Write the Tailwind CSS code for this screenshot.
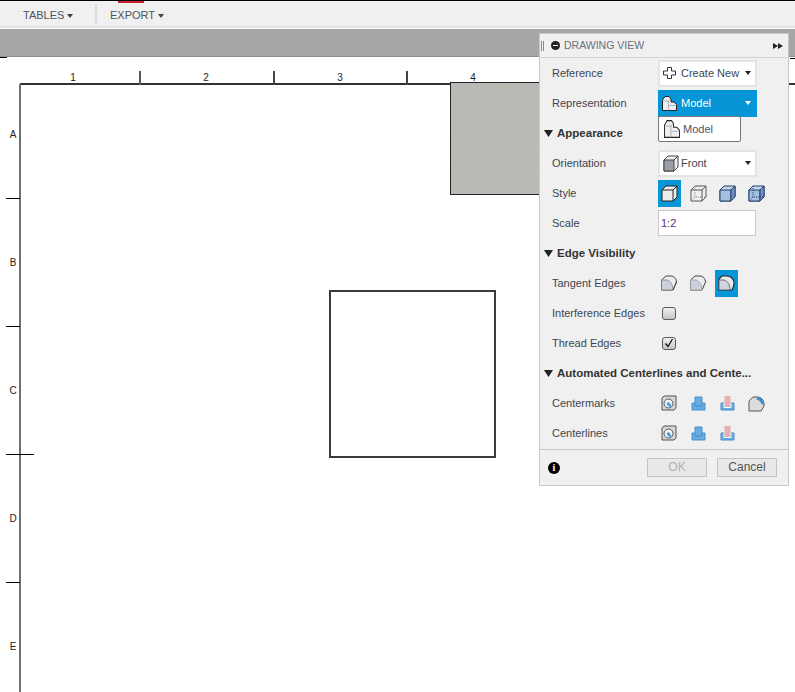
<!DOCTYPE html>
<html lang="en">
<head>
  <meta charset="UTF-8" />
  <title>Drawing View</title>
  <script src="https://cdn.jsdelivr.net/npm/@tailwindcss/browser@4"></script>
</head>
<body class="bg-white font-['Liberation_Sans',Arial,sans-serif] text-[11px] text-[#333]">
  <div class="relative w-[795px] h-[692px] overflow-hidden bg-white">

    <!-- Top toolbar -->
    <div class="relative h-[26px] bg-[#f0f0f0] border-t border-black flex items-center pt-[4px] text-[#4a5560]">
      <div class="absolute left-[118px] top-0 w-[26px] h-[2px] bg-[#c1272d]"></div>
      <div class="flex items-center gap-[3px] ml-[23px] w-[72px]">TABLES
        <svg width="6" height="4" viewBox="0 0 6 4"><path d="M0 0h6L3 4z" fill="#444"/></svg>
      </div>
      <div class="w-[2px] h-[20px] -mt-[4px] bg-[#dcdcdc]"></div>
      <div class="flex items-center gap-[3px] ml-[13px]">EXPORT
        <svg width="6" height="4" viewBox="0 0 6 4"><path d="M0 0h6L3 4z" fill="#444"/></svg>
      </div>
    </div>
    <div class="h-[3px] bg-[#e2e2e2] border-b border-white"></div>
    <!-- Gray band -->
    <div class="h-[28px] bg-[#a6a6a6] border-b border-[#8f8f8f]"></div>

    <!-- Sheet: drawn on a free canvas -->
    <div class="absolute left-0 top-[57px] w-[7px] h-px bg-black"></div>
    <div class="absolute left-[790px] top-[58px] w-[5px] h-px bg-black"></div>

    <div class="absolute left-[20px] top-[83px] w-[775px] h-[2px] bg-[#333]"></div>
    <div class="absolute left-[19px] top-[84px] w-[2px] h-[608px] bg-[#707070]"></div>

    <div class="absolute left-[139px] top-[71px] w-[2px] h-[14px] bg-[#555]"></div>
    <div class="absolute left-[273px] top-[71px] w-[2px] h-[14px] bg-[#444]"></div>
    <div class="absolute left-[406px] top-[71px] w-[2px] h-[14px] bg-[#444]"></div>

    <div class="absolute left-[69px] top-[71px] w-[8px] text-center text-[10px] leading-[13px] text-[#222]">1</div>
    <div class="absolute left-[202px] top-[71px] w-[8px] text-center text-[10px] leading-[13px] text-[#222]">2</div>
    <div class="absolute left-[336px] top-[71px] w-[8px] text-center text-[10px] leading-[13px] text-[#222]">3</div>
    <div class="absolute left-[469px] top-[71px] w-[8px] text-center text-[10px] leading-[13px] text-[#222]">4</div>

    <div class="absolute left-[6px] top-[198px] w-[14px] h-px bg-black"></div>
    <div class="absolute left-[6px] top-[326px] w-[14px] h-px bg-black"></div>
    <div class="absolute left-[6px] top-[454px] w-[28px] h-px bg-black"></div>
    <div class="absolute left-[6px] top-[582px] w-[14px] h-px bg-black"></div>

    <div class="absolute left-[8px] top-[128px] w-[10px] text-center text-[10px] leading-[13px] text-[#222]">A</div>
    <div class="absolute left-[8px] top-[256px] w-[10px] text-center text-[10px] leading-[13px] text-[#222]">B</div>
    <div class="absolute left-[8px] top-[384px] w-[10px] text-center text-[10px] leading-[13px] text-[#222]">C</div>
    <div class="absolute left-[8px] top-[512px] w-[10px] text-center text-[10px] leading-[13px] text-[#222]">D</div>
    <div class="absolute left-[8px] top-[640px] w-[10px] text-center text-[10px] leading-[13px] text-[#222]">E</div>

    <!-- Stone rendered view -->
    <div class="absolute left-[450px] top-[82px] w-[95px] h-[113px] border border-[#222] bg-[#bbbab5] overflow-hidden">
      <svg width="95" height="113" class="block">
        <filter id="stone" x="0" y="0" width="100%" height="100%">
          <feTurbulence type="fractalNoise" baseFrequency="0.09" numOctaves="4" seed="7" />
          <feColorMatrix type="matrix" values="0 0 0 0 0.48  0 0 0 0 0.48  0 0 0 0 0.46  1.800 0 0 0 -0.68" />
        </filter>
        <rect width="95" height="113" filter="url(#stone)" />
      </svg>
    </div>

    <!-- Plain view -->
    <div class="absolute left-[329px] top-[290px] w-[167px] h-[168px] border-2 border-[#3a3a3a]"></div>

    <!-- Drawing View panel -->
    <div class="absolute left-[539px] top-[33px] w-[250px] h-[453px] bg-[#f0f0f0] border border-[#c8c8c8] flex flex-col text-[#3c4650]">

      <div class="h-[24px] flex items-center border-b border-[#d4d4d4] shrink-0">
        <div class="w-[3px] h-[10px] ml-[1px] border-l border-r border-[#888]"></div>
        <div class="w-[9px] h-[9px] ml-[7px] rounded-full bg-[#222] flex items-center justify-center">
          <div class="w-[5px] h-px bg-white"></div>
        </div>
        <div class="ml-[4px] text-[#66707a] text-[10.5px]">DRAWING VIEW</div>
        <svg class="ml-auto mr-[5px]" width="10" height="6" viewBox="0 0 10 6"><path d="M0 0l5 3-5 3zM5 0l5 3-5 3z" fill="#222"/></svg>
      </div>

      <!-- Reference -->
      <div class="h-[30px] flex items-center pl-[12px] shrink-0">
        <div class="w-[106px]">Reference</div>
        <div class="w-[99px] h-[27px] bg-white border-2 border-[#e4e4e4] flex items-center pl-[3px]">
          <svg width="13" height="12" viewBox="0 0 13 12"><path d="M4.500 .5h4v3.500h4v4h-4v3.500h-4V8h-4V4h4z" fill="#fff" stroke="#333"/></svg>
          <span class="ml-[5px] text-[11px]">Create New</span>
          <svg class="ml-auto mr-[4px]" width="6" height="4" viewBox="0 0 6 4"><path d="M0 0h6L3 4z" fill="#222"/></svg>
        </div>
      </div>

      <!-- Representation -->
      <div class="relative h-[30px] flex items-center pl-[12px] shrink-0">
        <div class="w-[106px]">Representation</div>
        <div class="w-[99px] h-[27px] bg-[#0696d7] flex items-center pl-[4px] text-white">
          <svg width="15" height="15" viewBox="0 0 15 15"><path d="M.5 14.500V4L3 .5h4L9 3v3h3l2.500 2.500v6z" fill="#eceef2" stroke="#222"/><path d="M.5 5H6.500L9 3M6.500 5v9.500M6.500 9.500H12l2.500-1" fill="none" stroke="#999" stroke-width="0.700"/></svg>
          <span class="ml-[4px]">Model</span>
          <svg class="ml-auto mr-[6px]" width="6" height="4" viewBox="0 0 6 4"><path d="M0 0h6L3 4z" fill="#fff"/></svg>
        </div>
        <div class="absolute left-[118px] top-[28px] w-[83px] h-[26px] bg-white border border-[#777] rounded-[2px] flex items-center pl-[5px] z-10">
          <svg width="16" height="18" viewBox="0 0 15 15" preserveAspectRatio="none"><path d="M.5 14.500V4L3 .5h4L9 3v3h3l2.500 2.500v6z" fill="#eceef2" stroke="#222" stroke-width="0.900"/><path d="M.5 5H6.500L9 3M6.500 5v9.500M6.500 9.500H12l2.500-1" fill="none" stroke="#999" stroke-width="0.600"/></svg>
          <span class="ml-[3px] text-[#4a5560]">Model</span>
        </div>
      </div>

      <!-- Appearance -->
      <div class="h-[30px] flex items-center pl-[4px] pt-[1px] shrink-0 font-bold text-[11.5px] text-[#333]">
        <svg width="9" height="7" viewBox="0 0 9 7"><path d="M0 0h9L4.500 7z" fill="#222"/></svg>
        <span class="ml-[4px]">Appearance</span>
      </div>

      <!-- Orientation -->
      <div class="h-[30px] flex items-center pl-[12px] shrink-0">
        <div class="w-[106px]">Orientation</div>
        <div class="w-[99px] h-[27px] bg-white border-2 border-[#e4e4e4] flex items-center pl-[2px]">
          <svg width="18" height="18" viewBox="0 0 18 18"><path d="M2 6l4-4h10v11l-4 4H2z" fill="#eceef0" stroke="#444"/><path d="M2 6h10v11H2z" fill="#9a9ea6" stroke="#444"/><path d="M12 6l4-4" stroke="#444"/></svg>
          <span class="ml-[1px]">Front</span>
          <svg class="ml-auto mr-[4px]" width="6" height="4" viewBox="0 0 6 4"><path d="M0 0h6L3 4z" fill="#222"/></svg>
        </div>
      </div>

      <!-- Style -->
      <div class="h-[30px] flex items-center pl-[12px] shrink-0">
        <div class="w-[106px]">Style</div>
        <div class="flex items-center">
          <div class="w-[23px] h-[27px] bg-[#0696d7] flex items-center justify-center">
            <svg width="17" height="17" viewBox="0 0 17 17"><path d="M1 5l4-4h11v11l-4 4H1z" fill="#ececec" stroke="#222"/><path d="M1 5h11v11M12 5l4-4" fill="none" stroke="#222"/></svg>
          </div>
          <div class="ml-[9px] w-[17px] h-[17px]">
            <svg width="17" height="17" viewBox="0 0 17 17"><path d="M1 5l4-4h11v11l-4 4H1z" fill="none" stroke="#555"/><path d="M1 5h11v11M12 5l4-4" fill="none" stroke="#555"/><path d="M5 1v11h11M5 12l-4 4" fill="none" stroke="#888" stroke-dasharray="1 1"/></svg>
          </div>
          <div class="ml-[12px] w-[17px] h-[17px]">
            <svg width="17" height="17" viewBox="0 0 17 17"><path d="M1 5l4-4h11v11l-4 4H1z" fill="#c5d6ec" stroke="#24406b"/><path d="M1 5h11v11H1z" fill="#a4bedf" stroke="#24406b"/><path d="M12 5l4-4v11l-4 4z" fill="#6e93c4" stroke="#24406b"/></svg>
          </div>
          <div class="ml-[12px] w-[17px] h-[17px]">
            <svg width="17" height="17" viewBox="0 0 17 17"><path d="M1 5l4-4h11v11l-4 4H1z" fill="#c5d6ec" stroke="#24406b"/><path d="M1 5h11v11H1z" fill="#a4bedf" stroke="#24406b"/><path d="M12 5l4-4v11l-4 4z" fill="#6e93c4" stroke="#24406b"/><path d="M5 1v11h11M5 12l-4 4" fill="none" stroke="#24406b" stroke-dasharray="1 1"/></svg>
          </div>
        </div>
      </div>

      <!-- Scale -->
      <div class="h-[30px] flex items-center pl-[12px] shrink-0">
        <div class="w-[106px]">Scale</div>
        <div class="w-[98px] h-[26px] bg-white border border-[#c8c8c8] flex items-center pl-[2px] text-[#5a2a78]">1:2</div>
      </div>

      <!-- Edge Visibility -->
      <div class="h-[30px] flex items-center pl-[4px] pt-[1px] shrink-0 font-bold text-[11.5px] text-[#333]">
        <svg width="9" height="7" viewBox="0 0 9 7"><path d="M0 0h9L4.500 7z" fill="#222"/></svg>
        <span class="ml-[4px]">Edge Visibility</span>
      </div>

      <!-- Tangent Edges -->
      <div class="h-[30px] flex items-center pl-[12px] shrink-0">
        <div class="w-[109px]">Tangent Edges</div>
        <svg width="16" height="16" viewBox="0 0 16 16"><path d="M.5 15V5L5 1h5c3 0 5.500 3 5.500 6L12 15z" fill="#eceef3" stroke="#444"/><path d="M.5 5h6c3 1 5.500 5 5.500 10H.5z" fill="#cdd0db" stroke="#777" stroke-width="0.700"/><path d="M12 15l3.500-8" fill="none" stroke="#444"/></svg>
        <svg class="ml-[13px]" width="16" height="16" viewBox="0 0 16 16"><path d="M.5 15V5L5 1h5c3 0 5.500 3 5.500 6L12 15z" fill="#eceef3" stroke="#444"/><path d="M.5 5h6c3 1 5.500 5 5.500 10H.5z" fill="#cdd0db" stroke="#999" stroke-width="0.700"/></svg>
        <div class="ml-[9px] w-[23px] h-[27px] bg-[#0696d7] flex items-center justify-center">
          <svg width="17" height="16" viewBox="0 0 17 16"><path d="M1 15V4l3-3h5c4 0 7 3 7 7 0 3-1 5-2 7z" fill="#e6e8ee" stroke="#222" stroke-width="1.100"/><path d="M1 5h5c4 1 6 5 6 10H1z" fill="#cfd3dd" stroke="#555" stroke-width="0.800"/></svg>
        </div>
      </div>

      <!-- Interference Edges -->
      <div class="h-[30px] flex items-center pl-[12px] shrink-0">
        <div class="w-[110px]">Interference Edges</div>
        <div class="w-[14px] h-[13px] rounded-[3px] border border-[#5a5a5a] bg-linear-to-b from-[#f2f2f2] to-[#c4c4c4]"></div>
      </div>

      <!-- Thread Edges -->
      <div class="h-[30px] flex items-center pl-[12px] shrink-0">
        <div class="w-[110px]">Thread Edges</div>
        <div class="w-[14px] h-[13px] rounded-[3px] border border-[#5a5a5a] bg-linear-to-b from-[#f2f2f2] to-[#c4c4c4] flex items-center justify-center">
          <svg width="10" height="10" viewBox="0 0 10 10"><path d="M1.500 5.500L4 8.500 8.500 1" fill="none" stroke="#111" stroke-width="1.300"/></svg>
        </div>
      </div>

      <!-- Automated Centerlines -->
      <div class="h-[30px] flex items-center pl-[4px] pt-[1px] shrink-0 font-bold text-[11.5px] text-[#333]">
        <svg width="9" height="7" viewBox="0 0 9 7"><path d="M0 0h9L4.500 7z" fill="#222"/></svg>
        <span class="ml-[4px]">Automated Centerlines and Cente...</span>
      </div>

      <!-- Centermarks -->
      <div class="h-[30px] flex items-center pl-[12px] shrink-0">
        <div class="w-[109px]">Centermarks</div>
        <svg width="16" height="16" viewBox="0 0 16 16"><path d="M1 3l2-2h12v12l-2 2H1z" fill="#d6d6d6" stroke="#555"/><circle cx="7.500" cy="8.500" r="4.500" fill="#eef3f8" stroke="#555"/><path d="M5.500 8a4 4 0 0 0 5.500 3.500L8 7z" fill="#4f9fdc"/></svg>
        <svg class="ml-[14px]" width="15" height="15" viewBox="0 0 15 15"><path d="M4 1h7v6h3v7H1V7h3z" fill="#67ade3" stroke="#4b8fc6"/><path d="M4 7v3h7V7" fill="none" stroke="#4b8fc6"/></svg>
        <svg class="ml-[14px]" width="15" height="15" viewBox="0 0 15 15"><path d="M1 7h3v4h7V7h3v7H1z" fill="#67ade3" stroke="#4b8fc6"/><rect x="4.500" y="0" width="6" height="10.500" fill="#e6b0b0"/><path d="M4 7v4.500h7V7" fill="none" stroke="#fff"/></svg>
        <svg class="ml-[13px]" width="17" height="17" viewBox="0 0 17 17"><path d="M1 16V6l4-4h4c4 0 7 3 7 7v2l-3 5z" fill="#dcdcdc" stroke="#555"/><path d="M9 2c3.500 0 6.500 2.500 7 7l-2.500 .5C13 7 11 5 8.500 4.500z" fill="#3f8fd0"/></svg>
      </div>

      <!-- Centerlines -->
      <div class="h-[30px] flex items-center pl-[12px] shrink-0">
        <div class="w-[109px]">Centerlines</div>
        <svg width="16" height="16" viewBox="0 0 16 16"><path d="M1 3l2-2h12v12l-2 2H1z" fill="#d6d6d6" stroke="#555"/><circle cx="7.500" cy="8.500" r="4.500" fill="#eef3f8" stroke="#555"/><path d="M5.500 8a4 4 0 0 0 5.500 3.500L8 7z" fill="#4f9fdc"/></svg>
        <svg class="ml-[14px]" width="15" height="15" viewBox="0 0 15 15"><path d="M4 1h7v6h3v7H1V7h3z" fill="#67ade3" stroke="#4b8fc6"/><path d="M4 7v3h7V7" fill="none" stroke="#4b8fc6"/></svg>
        <svg class="ml-[14px]" width="15" height="15" viewBox="0 0 15 15"><path d="M1 7h3v4h7V7h3v7H1z" fill="#67ade3" stroke="#4b8fc6"/><rect x="4.500" y="0" width="6" height="10.500" fill="#e6b0b0"/><path d="M4 7v4.500h7V7" fill="none" stroke="#fff"/></svg>
      </div>

      <!-- Footer -->
      <div class="mt-[1px] flex-1 border-t border-[#c8c8c8] flex items-center pl-[8px] pr-[11px]">
        <div class="w-[12px] h-[12px] rounded-full bg-black text-white text-[10px] font-bold leading-[12px] text-center font-['Liberation_Serif',serif]">i</div>
        <div class="ml-auto w-[60px] h-[19px] border border-[#c4c4c4] bg-[#e8e8e8] text-[#b0b0b0] text-center text-[12px] leading-[17px]">OK</div>
        <div class="ml-[10px] w-[60px] h-[19px] border border-[#c4c4c4] bg-[#e8e8e8] text-[#555] text-center text-[12px] leading-[17px]">Cancel</div>
      </div>
    </div>
  </div>
</body>
</html>
